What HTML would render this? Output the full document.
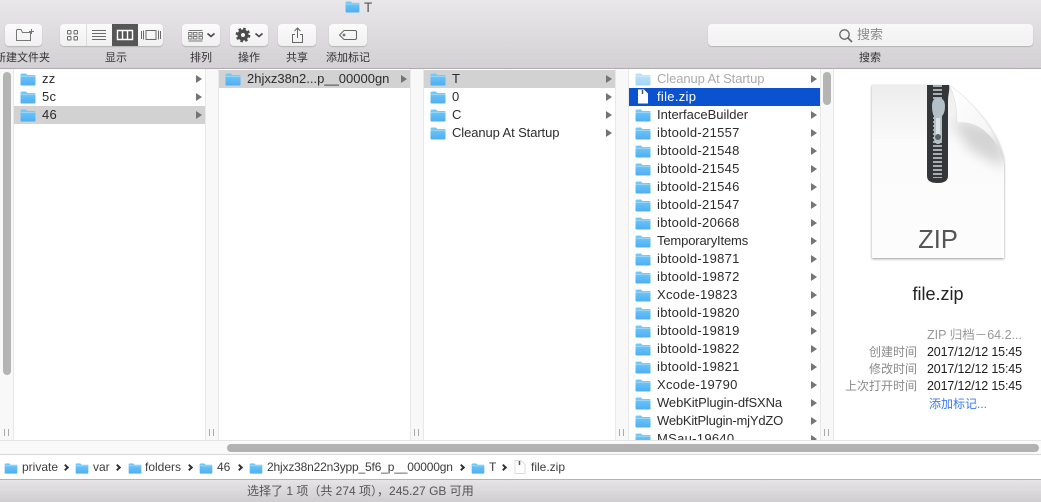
<!DOCTYPE html>
<html><head><meta charset="utf-8"><style>
html,body{margin:0;padding:0;background:#fff}
body{position:relative;width:1041px;height:502px;overflow:hidden;font-family:"Liberation Sans","Noto Sans CJK SC",sans-serif;color:#333}
#w{position:absolute;left:0;top:0;width:1041px;height:502px;overflow:hidden;filter:blur(.3px)}
.a{position:absolute;white-space:nowrap}
#tb{left:0;top:0;width:1041px;height:68px;background:linear-gradient(#e9e7e9,#d2d0d2);border-bottom:1px solid #aeacae}
.btn{position:absolute;top:24px;height:22px;background:linear-gradient(#fbfbfb,#f0f0f0);border-radius:4px;box-shadow:0 1px 1px #b5b3b5}
.lb{position:absolute;top:51px;font-size:11px;line-height:14px;color:#333;text-align:center;white-space:nowrap}
.col{position:absolute;top:69px;height:372px;overflow:hidden;background:#fff}
.gut{position:absolute;top:69px;height:372px;background:#f8f8f8;border-left:1px solid #e8e8e8;border-right:1px solid #e8e8e8;box-sizing:border-box}
.r{position:absolute;left:0;right:0;height:18px;line-height:18px;font-size:13px;letter-spacing:.3px;color:#2c2c2c;white-space:nowrap}
.r svg.f{position:absolute;left:6px;top:3px;width:16px;height:13px}
.r span{position:absolute;left:28px}
.r b{position:absolute;right:3px;top:5px;width:0;height:0;border-left:6px solid #747474;border-top:4px solid transparent;border-bottom:4px solid transparent}
.g{background:#d2d2d2}
.s{background:#0a52d0;color:#fff}
.z span{letter-spacing:-.1px}
.p{position:absolute;top:460px;font-size:12px;line-height:15px;color:#3c3c3c;white-space:nowrap}
.pf{position:absolute;top:463px;width:14px;height:11px}
.ch{position:absolute;top:465px;width:3px;height:3px;border-top:2px solid #333;border-right:2px solid #333;transform:rotate(45deg)}
.k{position:absolute;width:72px;left:845px;text-align:right;font-size:12px;line-height:16px;color:#8a8a8a;white-space:nowrap}
.v{position:absolute;left:927px;font-size:12.5px;letter-spacing:-.15px;line-height:16px;color:#1e1e1e;white-space:nowrap}
.h{position:absolute;top:429px;width:3px;height:7px;border-left:1px solid #aaa;border-right:1px solid #aaa}
</style></head><body><div id="w">
<svg width="0" height="0" style="position:absolute"><defs>
<linearGradient id="fg" x1="0" y1="0" x2="0" y2="1"><stop offset="0" stop-color="#74cbfa"/><stop offset="1" stop-color="#4eaef0"/></linearGradient>
<symbol id="fo" viewBox="0 0 16 13"><path d="M.5 2Q.5 .5 2 .5H6L7.5 2H15Q15.500 2 15.500 3V11.500Q15.500 12.500 14.500 12.500H1.500Q.5 12.500 .5 11.500Z" fill="url(#fg)"/><path d="M.5 3.300H15.500" stroke="#a6dffc" stroke-width=".8"/></symbol>
</defs></svg>

<div class="a" id="tb"></div>
<svg class="a" style="left:345px;top:1px" width="15" height="12"><use href="#fo" width="15" height="12"/></svg>
<div class="a" style="left:364px;top:0;font-size:13.500px;line-height:15px;color:#555">T</div>

<div class="btn" style="left:5px;width:37px"></div>
<svg class="a" style="left:15px;top:28px" width="20" height="14" fill="none" stroke="#777"><path d="M1.500 2.500V12.500H15.500V4.500H7.500L6 1.500H2Z"/><path d="M14 3.500H19M16.500 1V6"/></svg>
<div class="btn" style="left:60px;width:103px"></div>
<div class="a" style="left:112px;top:24px;width:26px;height:22px;background:#565656"></div>
<div class="a" style="left:86px;top:24px;width:1px;height:22px;background:#dcdcdc"></div>
<svg class="a" style="left:60px;top:24px" width="103" height="22" fill="none" stroke="#6a6a6a">
<rect x="7.500" y="6.500" width="3.500" height="3.500" rx=".8"/><rect x="14" y="6.500" width="3.500" height="3.500" rx=".8"/><rect x="7.500" y="12.500" width="3.500" height="3.500" rx=".8"/><rect x="14" y="12.500" width="3.500" height="3.500" rx=".8"/>
<path d="M32 6.500H46M32 9.500H46M32 12.500H46M32 15.500H46"/>
<path d="M57.500 6.500H72.500V15.500H57.500ZM62.500 6.500V15.500M67.500 6.500V15.500" stroke="#fff" stroke-width="1.400"/>
<rect x="86" y="6.500" width="10" height="9"/><path d="M83.500 6.500V15.500M81.500 7V15M98.500 6.500V15.500M100.500 7V15"/>
</svg>
<div class="btn" style="left:182px;width:38px"></div>
<svg class="a" style="left:182px;top:24px" width="38" height="22" fill="none" stroke="#777"><path d="M6.500 6.500H20.500M6.500 17H20.500"/><path d="M6.500 8.500H10V11H6.500ZM11.500 8.500H15V11H11.500ZM17 8.500H20.500V11H17ZM6.500 12.500H10V15H6.500ZM11.500 12.500H15V15H11.500ZM17 12.500H20.500V15H17Z" stroke-width=".9"/><path d="M25.500 9.500L29 12.500L32.500 9.500" stroke="#444" stroke-width="1.600"/></svg>
<div class="btn" style="left:230px;width:38px"></div>
<svg class="a" style="left:230px;top:24px" width="38" height="22" fill="none"><circle cx="13" cy="11" r="3.800" stroke="#4c4c4c" stroke-width="3.600"/><circle cx="13" cy="11" r="6.200" stroke="#4c4c4c" stroke-width="2.300" stroke-dasharray="2.600 2.270"/><path d="M25.500 9.500L29 12.500L32.500 9.500" stroke="#444" stroke-width="1.600"/></svg>
<div class="btn" style="left:278px;width:38px"></div>
<svg class="a" style="left:278px;top:24px" width="38" height="22" fill="none" stroke="#666"><path d="M17 10.500H14.500V18.500H24.500V10.500H22M19.500 14V4.500M16.500 7L19.500 4L22.500 7"/></svg>
<div class="btn" style="left:329px;width:38px"></div>
<svg class="a" style="left:329px;top:24px" width="38" height="22" fill="none" stroke="#666"><path d="M15 6.500H26Q27.500 6.500 27.500 8V14Q27.500 15.500 26 15.500H15L10.500 11Z"/><circle cx="15" cy="11" r=".9"/></svg>

<div class="lb" style="left:-5px;width:56px;text-align:left">新建文件夹</div>
<div class="lb" style="left:96px;width:40px">显示</div>
<div class="lb" style="left:181px;width:40px">排列</div>
<div class="lb" style="left:229px;width:40px">操作</div>
<div class="lb" style="left:277px;width:40px">共享</div>
<div class="lb" style="left:320px;width:56px">添加标记</div>
<div class="lb" style="left:850px;width:40px">搜索</div>

<div class="a" style="left:708px;top:24px;width:325px;height:22px;background:linear-gradient(#f8f8f8,#f1f1f1);border-radius:4px;box-shadow:0 1px 1px #b5b3b5"></div>
<svg class="a" style="left:838px;top:28px" width="15" height="15" fill="none" stroke="#666" stroke-width="1.300"><circle cx="6.500" cy="6.500" r="4.700"/><path d="M10 10L14 14" stroke-width="1.600"/></svg>
<div class="a" style="left:857px;top:27px;font-size:13px;line-height:16px;color:#8a8a8a">搜索</div>

<div class="gut" style="left:0;width:14px;border-left:0"></div>
<div class="a" style="left:3px;top:72px;width:8px;height:303px;background:#b4b4b4;border-radius:4px"></div>

<div class="col" style="left:14px;width:191px">
<div class="r" style="top:1px"><svg class="f"><use href="#fo" width="16" height="13"/></svg><span>zz</span><b></b></div>
<div class="r" style="top:19px"><svg class="f"><use href="#fo" width="16" height="13"/></svg><span>5c</span><b></b></div>
<div class="r g" style="top:37px"><svg class="f"><use href="#fo" width="16" height="13"/></svg><span>46</span><b></b></div>
</div>
<div class="gut" style="left:205px;width:14px"></div>
<div class="col" style="left:219px;width:191px">
<div class="r g z" style="top:1px"><svg class="f"><use href="#fo" width="16" height="13"/></svg><span style="letter-spacing:0">2hjxz38n2...p__00000gn</span><b></b></div>
</div>
<div class="gut" style="left:410px;width:14px"></div>
<div class="col" style="left:424px;width:191px">
<div class="r g" style="top:1px"><svg class="f"><use href="#fo" width="16" height="13"/></svg><span>T</span><b></b></div>
<div class="r" style="top:19px"><svg class="f"><use href="#fo" width="16" height="13"/></svg><span>0</span><b></b></div>
<div class="r" style="top:37px"><svg class="f"><use href="#fo" width="16" height="13"/></svg><span>C</span><b></b></div>
<div class="r z" style="top:55px"><svg class="f"><use href="#fo" width="16" height="13"/></svg><span>Cleanup At Startup</span><b></b></div>
</div>
<div class="gut" style="left:615px;width:14px"></div>
<div class="col" style="left:629px;width:191px">
<div class="r z" style="top:1px;color:#aaa"><svg class="f" style="opacity:.5"><use href="#fo" width="16" height="13"/></svg><span>Cleanup At Startup</span><b></b></div>
<div class="r s" style="top:19px"><svg class="f" style="left:8px;top:1px;width:12px;height:15px"><path d="M1 .5H7L11 4.500V14.500H1Z" fill="#fff"/><path d="M5.500 1V5" stroke="#555" stroke-width="1.500"/></svg><span>file.zip</span></div>
<div class="r" style="top:37px"><svg class="f"><use href="#fo" width="16" height="13"/></svg><span style="letter-spacing:0">InterfaceBuilder</span><b></b></div>
<div class="r" style="top:55px"><svg class="f"><use href="#fo" width="16" height="13"/></svg><span>ibtoold-21557</span><b></b></div>
<div class="r" style="top:73px"><svg class="f"><use href="#fo" width="16" height="13"/></svg><span>ibtoold-21548</span><b></b></div>
<div class="r" style="top:91px"><svg class="f"><use href="#fo" width="16" height="13"/></svg><span>ibtoold-21545</span><b></b></div>
<div class="r" style="top:109px"><svg class="f"><use href="#fo" width="16" height="13"/></svg><span>ibtoold-21546</span><b></b></div>
<div class="r" style="top:127px"><svg class="f"><use href="#fo" width="16" height="13"/></svg><span>ibtoold-21547</span><b></b></div>
<div class="r" style="top:145px"><svg class="f"><use href="#fo" width="16" height="13"/></svg><span>ibtoold-20668</span><b></b></div>
<div class="r" style="top:163px"><svg class="f"><use href="#fo" width="16" height="13"/></svg><span style="letter-spacing:-.15px">TemporaryItems</span><b></b></div>
<div class="r" style="top:181px"><svg class="f"><use href="#fo" width="16" height="13"/></svg><span>ibtoold-19871</span><b></b></div>
<div class="r" style="top:199px"><svg class="f"><use href="#fo" width="16" height="13"/></svg><span>ibtoold-19872</span><b></b></div>
<div class="r" style="top:217px"><svg class="f"><use href="#fo" width="16" height="13"/></svg><span>Xcode-19823</span><b></b></div>
<div class="r" style="top:235px"><svg class="f"><use href="#fo" width="16" height="13"/></svg><span>ibtoold-19820</span><b></b></div>
<div class="r" style="top:253px"><svg class="f"><use href="#fo" width="16" height="13"/></svg><span>ibtoold-19819</span><b></b></div>
<div class="r" style="top:271px"><svg class="f"><use href="#fo" width="16" height="13"/></svg><span>ibtoold-19822</span><b></b></div>
<div class="r" style="top:289px"><svg class="f"><use href="#fo" width="16" height="13"/></svg><span>ibtoold-19821</span><b></b></div>
<div class="r" style="top:307px"><svg class="f"><use href="#fo" width="16" height="13"/></svg><span>Xcode-19790</span><b></b></div>
<div class="r" style="top:325px"><svg class="f"><use href="#fo" width="16" height="13"/></svg><span style="letter-spacing:-.1px">WebKitPlugin-dfSXNa</span><b></b></div>
<div class="r" style="top:343px"><svg class="f"><use href="#fo" width="16" height="13"/></svg><span style="letter-spacing:-.2px">WebKitPlugin-mjYdZO</span><b></b></div>
<div class="r" style="top:361px"><svg class="f"><use href="#fo" width="16" height="13"/></svg><span>MSau-19640</span><b></b></div>
</div>
<div class="gut" style="left:820px;width:14px"></div>
<div class="a" style="left:823px;top:72px;width:8px;height:33px;background:#b4b4b4;border-radius:4px"></div>

<div class="h" style="left:4px"></div>
<div class="h" style="left:209px"></div>
<div class="h" style="left:414px"></div>
<div class="h" style="left:619px"></div>
<div class="h" style="left:824px"></div>

<svg class="a" style="left:860px;top:78px" width="155" height="190" viewBox="860 78 155 190">
<defs>
<filter id="sh" x="-10%" y="-10%" width="120%" height="120%"><feDropShadow dx="0" dy="1" stdDeviation="1.200" flood-color="#000" flood-opacity=".4"/></filter>
<filter id="bl" x="-30%" y="-30%" width="160%" height="160%"><feGaussianBlur stdDeviation="6"/></filter>
<linearGradient id="fold" x1="0" y1="0" x2="1" y2="1"><stop offset="0" stop-color="#fff"/><stop offset=".65" stop-color="#f6f6f6"/><stop offset="1" stop-color="#cfcfcf"/></linearGradient>
<linearGradient id="pg1" x1="0" y1="0" x2="0" y2="1"><stop offset="0" stop-color="#ededed"/><stop offset=".35" stop-color="#fbfbfb"/><stop offset="1" stop-color="#fcfcfc"/></linearGradient>
<clipPath id="pg"><path d="M872 85H948C970 100 1004 135 1004 165V258H872Z"/></clipPath>
</defs>
<path d="M872 85H948C970 100 1004 135 1004 165V258H872Z" fill="url(#pg1)" filter="url(#sh)"/>
<g clip-path="url(#pg)"><path d="M952 120L1004 128V168L970 150Z" fill="#b5b5b5" opacity=".55" filter="url(#bl)"/></g>
<path d="M949 85C966 96 1000 130 1004 162C996 136 978 120 957 123C957 110 955 95 949 85Z" fill="url(#fold)" stroke="#dcdcdc" stroke-width=".5"/>
<path d="M927 85H949C950 90 948 95 948 100V176Q948 183 937.500 183Q927 183 927 176Z" fill="#33373a"/>
<path d="M937.500 85V178" stroke="#a6aeb3" stroke-width="9" stroke-dasharray="2 2"/>
<path d="M932 106Q932 98 938 98Q945 98 945 106Q945 113 942 116V138Q942 144 938 144Q934 144 934 138V116Q932 113 932 106Z" fill="#b4c0c8"/>
<path d="M936 118H940V138H936Z" fill="#dbe2e6"/>
<circle cx="938" cy="137" r="3" fill="#5a6064"/>
<text x="938" y="248" font-family="Liberation Sans" font-size="25.500" fill="#555" text-anchor="middle">ZIP</text>
</svg>

<div class="a" style="left:860px;width:156px;top:284px;text-align:center;font-size:18px;line-height:20px;color:#222">file.zip</div>
<div class="v" style="top:327px;color:#999;letter-spacing:0">ZIP 归档－64.2...</div>
<div class="k" style="top:344px">创建时间</div><div class="v" style="top:344px">2017/12/12 15:45</div>
<div class="k" style="top:361px">修改时间</div><div class="v" style="top:361px">2017/12/12 15:45</div>
<div class="k" style="top:378px">上次打开时间</div><div class="v" style="top:378px">2017/12/12 15:45</div>
<div class="a" style="left:929px;top:396px;font-size:12px;line-height:16px;color:#3a7bf0">添加标记...</div>

<div class="a" style="left:0;top:440px;width:1041px;height:15px;background:#f9f9f9;border-top:1px solid #e4e4e4;border-bottom:1px solid #d8d8d8;box-sizing:border-box"></div>
<div class="a" style="left:227px;top:444px;width:812px;height:8px;background:#b2b2b2;border-radius:4px"></div>

<div class="a" style="left:0;top:455px;width:1041px;height:24px;background:#fff"></div>
<svg class="pf" style="left:4px"><use href="#fo" width="14" height="11"/></svg><div class="p" style="left:22px">private</div><div class="ch" style="left:63px"></div>
<svg class="pf" style="left:75px"><use href="#fo" width="14" height="11"/></svg><div class="p" style="left:93px">var</div><div class="ch" style="left:115px"></div>
<svg class="pf" style="left:128px"><use href="#fo" width="14" height="11"/></svg><div class="p" style="left:145px">folders</div><div class="ch" style="left:187px"></div>
<svg class="pf" style="left:199px"><use href="#fo" width="14" height="11"/></svg><div class="p" style="left:217px">46</div><div class="ch" style="left:237px"></div>
<svg class="pf" style="left:249px"><use href="#fo" width="14" height="11"/></svg><div class="p" style="left:267px;letter-spacing:-.17px">2hjxz38n22n3ypp_5f6_p__00000gn</div><div class="ch" style="left:459px"></div>
<svg class="pf" style="left:471px"><use href="#fo" width="14" height="11"/></svg><div class="p" style="left:489px">T</div><div class="ch" style="left:501px"></div>
<svg class="a" style="left:514px;top:460px" width="12" height="14"><path d="M1 .5H7L11 4.500V13.500H1Z" fill="#fff" stroke="#ddd"/><path d="M5.500 1V5" stroke="#555" stroke-width="1.500"/></svg>
<div class="p" style="left:531px">file.zip</div>

<div class="a" style="left:0;top:479px;width:1041px;height:23px;background:linear-gradient(#e6e4e6,#cfcdcf);border-top:1px solid #b4b2b4;box-sizing:border-box"></div>
<div class="a" style="left:247px;top:483px;font-size:12px;line-height:16px;color:#555">选择了 1 项（共 274 项），245.27 GB 可用</div>
</div></body></html>
